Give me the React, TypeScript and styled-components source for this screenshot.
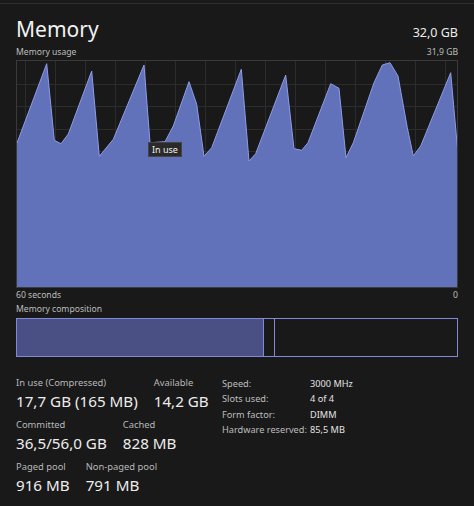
import React from "react";
import styled, { createGlobalStyle } from "styled-components";

const Global = createGlobalStyle`
  html, body { margin: 0; padding: 0; background: #191919; }
  body { font-family: "Segoe UI", "Noto Sans", "Open Sans", sans-serif; color: #e6e6e6; }
  * { box-sizing: border-box; }
`;

const Page = styled.div`
  width: 474px;
  height: 506px;
  background: #191919;
  overflow: hidden;
  padding-top: 3px;
`;

const TopRule = styled.div`
  height: 1px;
  background: #2f2f2f;
`;

const Content = styled.div`
  padding: 0 16px 0 16px;
`;

const Header = styled.div`
  display: flex;
  justify-content: space-between;
  align-items: baseline;
  margin-top: 10px;
  height: 30px;
`;

const Title = styled.div`
  font-size: 21px;
  line-height: 30px;
  color: #f2f2f2;
`;

const Total = styled.div`
  font-size: 12.5px;
  color: #ececec;
`;

const Caption = styled.div<{ $gap?: number }>`
  display: flex;
  justify-content: space-between;
  margin-top: ${(p) => p.$gap ?? 0}px;
  font-size: 8.6px;
  line-height: 12px;
  color: #bdbdbd;
`;

const ChartBox = styled.div`
  position: relative;
  margin-top: 2px;
  width: 442px;
  height: 228px;
  border: 1px solid #3a3a3a;
`;

const ChartSvg = styled.svg`
  display: block;
`;

const Tip = styled.div`
  position: absolute;
  left: 131px;
  top: 81px;
  padding: 0 3px;
  height: 15px;
  line-height: 14px;
  font-size: 9px;
  color: #f0f0f0;
  background: #2a2a2a;
  border: 1px solid #444;
`;

const CompositionBar = styled.div`
  display: flex;
  margin-top: 3px;
  width: 442px;
  height: 39px;
  border: 1px solid #8088d9;
`;

const Segment = styled.div<{ $w?: number; $fill?: string; $divider?: boolean }>`
  ${(p) => (p.$w ? `width: ${p.$w}px;` : "flex: 1;")}
  background: ${(p) => p.$fill ?? "transparent"};
  ${(p) => (p.$divider ? "border-left: 1px solid #8088d9;" : "")}
`;

const Stats = styled.div`
  display: flex;
  margin-top: 19px;
`;

const LeftStats = styled.div`
  display: flex;
  flex-direction: column;
  width: 206px;
  gap: 5px;
`;

const StatRow = styled.div`
  display: flex;
  gap: 16px;
`;

const Stat = styled.div`
  display: flex;
  flex-direction: column;
`;

const StatLabel = styled.div`
  font-size: 9.4px;
  line-height: 14px;
  color: #b8b8b8;
  white-space: nowrap;
`;

const StatValue = styled.div`
  font-size: 15.2px;
  line-height: 23px;
  color: #ededed;
  white-space: nowrap;
`;

const Props = styled.div`
  display: grid;
  grid-template-columns: 88px auto;
  grid-auto-rows: 15.3px;
  font-size: 9.2px;
  align-content: start;
  margin-top: 1px;
`;

const PropKey = styled.div`
  color: #bdbdbd;
  line-height: 13px;
  white-space: nowrap;
`;

const PropVal = styled.div`
  color: #e2e2e2;
  line-height: 13px;
  white-space: nowrap;
`;

const pts: [number, number][] = [
  [17, 142], [46.7, 62.7], [54.3, 139.3], [61, 142.7], [68.3, 133], [91.7, 70],
  [99.3, 155.3], [113.3, 138.3], [144, 64], [150, 141.7], [165, 140.7],
  [173.3, 125], [189, 80.7], [196.7, 103.3], [204, 155.3], [211.7, 146.7],
  [241.3, 68.3], [249, 160], [255.7, 152.7], [285.7, 74], [294, 147.7],
  [301.7, 149.3], [308, 141.7], [330.7, 82.7], [339, 87.3], [346, 156.7],
  [353.3, 141.7], [374, 81.7], [382.3, 64], [390, 61.7], [398, 75],
  [407.3, 126.7], [413.3, 155], [420.7, 145], [450.7, 71.7], [458, 153.3],
];

const areaPoints =
  pts.map(([x, y]) => `${x},${y}`).join(" ") + " 458,287 17,287";
const linePoints = pts.map(([x, y]) => `${x},${y}`).join(" ");

const vLines = Array.from({ length: 15 }, (_, i) => 25 + i * 30);
const hLines = Array.from({ length: 9 }, (_, i) => 60 + (i + 1) * 22.6);

function Chart() {
  return (
    <ChartSvg width={440} height={226} viewBox="17 60 440 226">
      {vLines.map((x) => (
        <line key={"v" + x} x1={x + 0.5} x2={x + 0.5} y1={60} y2={286} stroke="#2c2c2c" strokeWidth={1} />
      ))}
      {hLines.map((y) => (
        <line key={"h" + y} x1={17} x2={457} y1={Math.round(y) + 0.5} y2={Math.round(y) + 0.5} stroke="#2c2c2c" strokeWidth={1} />
      ))}
      <polygon points={areaPoints} fill="#6171ba" />
      <polyline points={linePoints} fill="none" stroke="#8e9ce6" strokeWidth={1} />
    </ChartSvg>
  );
}

export default function App() {
  return (
    <Page>
      <Global />
      <TopRule />
      <Content>
        <Header>
          <Title>Memory</Title>
          <Total>32,0 GB</Total>
        </Header>
        <Caption $gap={2}>
          <span>Memory usage</span>
          <span>31,9 GB</span>
        </Caption>
        <ChartBox>
          <Chart />
          <Tip>In use</Tip>
        </ChartBox>
        <Caption $gap={1}>
          <span>60 seconds</span>
          <span>0</span>
        </Caption>
        <Caption $gap={2}>
          <span>Memory composition</span>
        </Caption>
        <CompositionBar>
          <Segment $w={246} $fill="#4a5083" />
          <Segment $w={11} $divider />
          <Segment $divider />
        </CompositionBar>
        <Stats>
          <LeftStats>
            <StatRow>
              <Stat>
                <StatLabel>In use (Compressed)</StatLabel>
                <StatValue>17,7 GB (165 MB)</StatValue>
              </Stat>
              <Stat>
                <StatLabel>Available</StatLabel>
                <StatValue>14,2 GB</StatValue>
              </Stat>
            </StatRow>
            <StatRow>
              <Stat>
                <StatLabel>Committed</StatLabel>
                <StatValue>36,5/56,0 GB</StatValue>
              </Stat>
              <Stat>
                <StatLabel>Cached</StatLabel>
                <StatValue>828 MB</StatValue>
              </Stat>
            </StatRow>
            <StatRow>
              <Stat>
                <StatLabel>Paged pool</StatLabel>
                <StatValue>916 MB</StatValue>
              </Stat>
              <Stat>
                <StatLabel>Non-paged pool</StatLabel>
                <StatValue>791 MB</StatValue>
              </Stat>
            </StatRow>
          </LeftStats>
          <Props>
            <PropKey>Speed:</PropKey>
            <PropVal>3000 MHz</PropVal>
            <PropKey>Slots used:</PropKey>
            <PropVal>4 of 4</PropVal>
            <PropKey>Form factor:</PropKey>
            <PropVal>DIMM</PropVal>
            <PropKey>Hardware reserved:</PropKey>
            <PropVal>85,5 MB</PropVal>
          </Props>
        </Stats>
      </Content>
    </Page>
  );
}
